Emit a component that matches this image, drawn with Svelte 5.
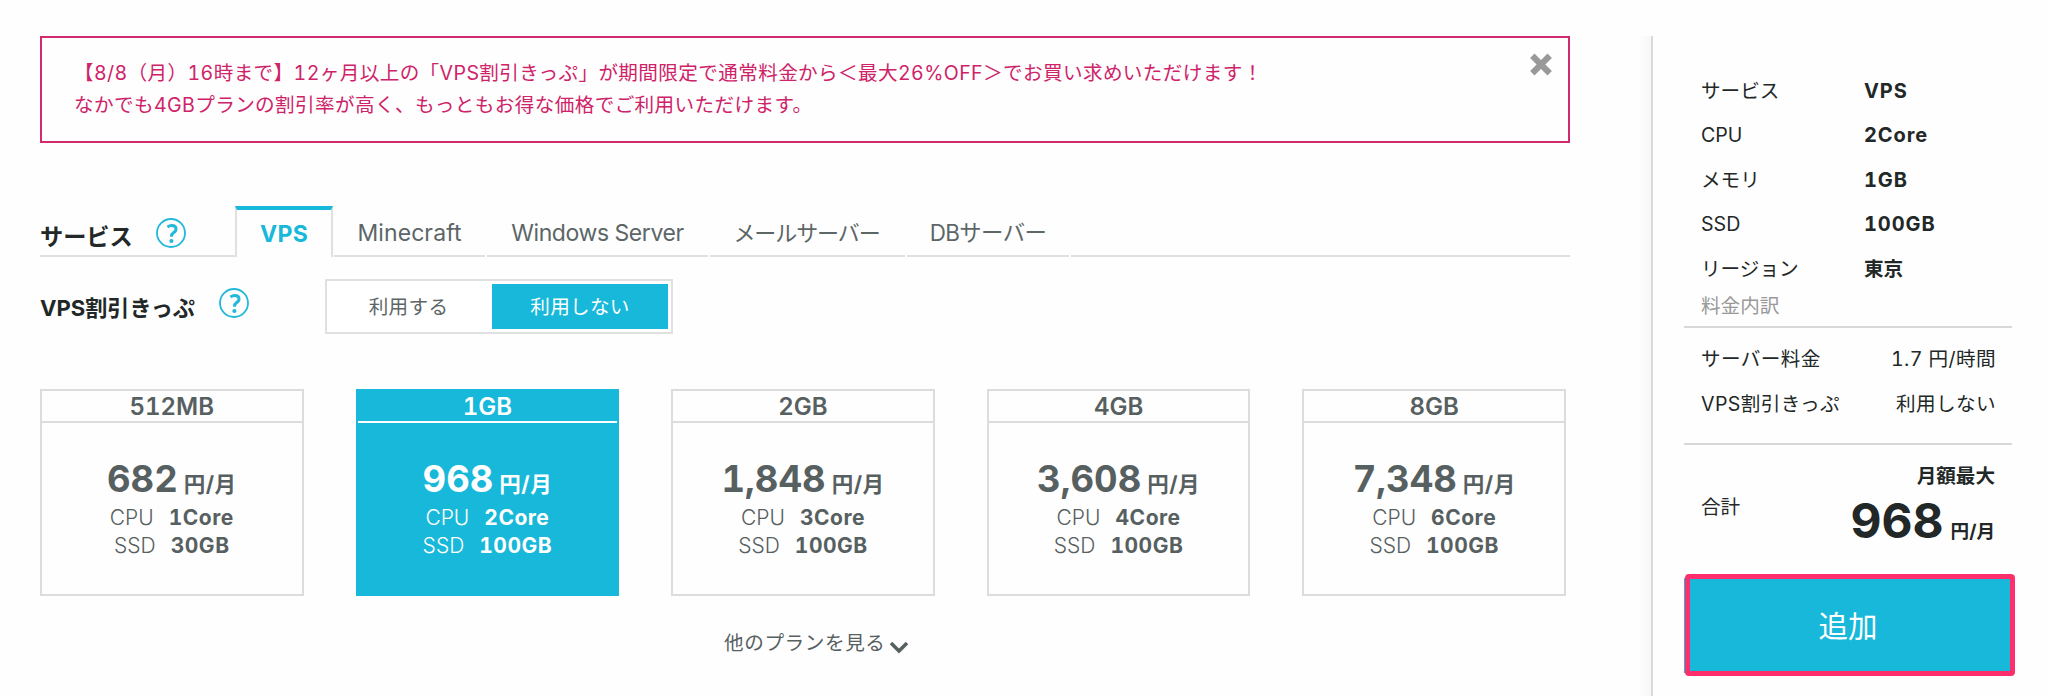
<script lang="ts">
  type Plan = { name: string; price: string; cpu: string; ssd: string };

  const services = ['VPS', 'Minecraft', 'Windows Server', 'メールサーバー', 'DBサーバー'];
  const ticketOptions = ['利用する', '利用しない'];

  const plans: Plan[] = [
    { name: '512MB', price: '682', cpu: '1Core', ssd: '30GB' },
    { name: '1GB', price: '968', cpu: '2Core', ssd: '100GB' },
    { name: '2GB', price: '1,848', cpu: '3Core', ssd: '100GB' },
    { name: '4GB', price: '3,608', cpu: '4Core', ssd: '100GB' },
    { name: '8GB', price: '7,348', cpu: '6Core', ssd: '100GB' },
  ];

  let service = $state('VPS');
  let ticket = $state('利用しない');
  let selected = $state(1);
  let noticeOpen = $state(true);

  let plan = $derived(plans[selected]);
  let summary = $derived([
    ['サービス', service],
    ['CPU', plan.cpu],
    ['メモリ', plan.name],
    ['SSD', plan.ssd],
    ['リージョン', '東京'],
  ]);
</script>

{#snippet help()}
  <button type="button" class="help" aria-label="ヘルプ">
    <svg viewBox="0 0 30 30" width="30" height="30">
      <circle cx="15" cy="15" r="14" fill="none" stroke="currentColor" stroke-width="1.8" />
      <path d="M11.4 8.9 Q13.4 7.6 15.8 7.6 Q20 7.6 20 11 Q20 13.2 17.6 14.6 Q15.5 16 15.5 18.8" fill="none" stroke="currentColor" stroke-width="3" />
      <circle cx="15.4" cy="23" r="2.1" fill="currentColor" />
    </svg>
  </button>
{/snippet}

<div class="page">
  <main>
    {#if noticeOpen}
      <div class="notice">
        <p>【8/8（月）16時まで】12ヶ月以上の「VPS割引きっぷ」が期間限定で通常料金から＜最大26%OFF＞でお買い求めいただけます！</p>
        <p>なかでも4GBプランの割引率が高く、もっともお得な価格でご利用いただけます。</p>
        <button type="button" class="close" aria-label="閉じる" onclick={() => (noticeOpen = false)}>
          <svg viewBox="0 0 24 24" width="24" height="24">
            <path d="M3.3 2.8 L20.7 20.2 M20.7 2.8 L3.3 20.2" stroke="currentColor" stroke-width="6.2" />
          </svg>
        </button>
      </div>
    {/if}

    <div class="services">
      <div class="heading">
        <h2>サービス</h2>
        {@render help()}
      </div>
      {#each services as name, i}
        <button type="button" class="tab tab-{i}" class:active={service === name} onclick={() => (service = name)}>
          {name}
        </button>
      {/each}
      <div class="rest"></div>
    </div>

    <div class="ticket">
      <h2>VPS割引きっぷ</h2>
      {@render help()}
      <div class="switch">
        {#each ticketOptions as option}
          <button type="button" class:on={ticket === option} onclick={() => (ticket = option)}>{option}</button>
        {/each}
      </div>
    </div>

    <div class="plans">
      {#each plans as p, i}
        <button type="button" class="plan" class:selected={selected === i} onclick={() => (selected = i)}>
          <span class="name">{p.name}</span>
          <span class="price"><b>{p.price}</b><small>円/月</small></span>
          <span class="spec"><span>CPU</span><b>{p.cpu}</b></span>
          <span class="spec"><span>SSD</span><b>{p.ssd}</b></span>
        </button>
      {/each}
    </div>

    <button type="button" class="more">
      <span>他のプランを見る</span>
      <svg viewBox="0 0 20 16" width="20" height="16">
        <path d="M2 4 L10 12 L18 4" fill="none" stroke="currentColor" stroke-width="3.6" />
      </svg>
    </button>
  </main>

  <aside>
    <dl>
      {#each summary as [label, value]}
        <div class="row">
          <dt>{label}</dt>
          <dd>{value}</dd>
        </div>
      {/each}
    </dl>
    <p class="caption">料金内訳</p>
    <div class="charges">
      <div class="charge"><span>サーバー料金</span><span>1.7 円/時間</span></div>
      <div class="charge"><span>VPS割引きっぷ</span><span>{ticket}</span></div>
    </div>
    <div class="total">
      <span class="label">合計</span>
      <div class="amount">
        <span class="max">月額最大</span>
        <span class="sum"><b>{plan.price}</b><small>円/月</small></span>
      </div>
    </div>
    <div class="submit">
      <button type="button">追加</button>
    </div>
  </aside>
</div>

<style>
  :global(body) {
    background: #fefefe;
  }

  .page {
    display: flex;
    box-sizing: border-box;
    width: 2048px;
    height: 696px;
    padding-top: 36px;
    overflow: hidden;
    font-family: Inter, 'Noto Sans CJK JP', sans-serif;
    font-size: 19.6px;
    font-variant-numeric: tabular-nums;
    color: #222827;
  }

  button {
    padding: 0;
    border: none;
    background: none;
    font: inherit;
    font-variant-numeric: tabular-nums;
    letter-spacing: inherit;
    color: inherit;
    cursor: pointer;
  }

  svg {
    display: block;
  }

  h2,
  p,
  dl,
  dd {
    margin: 0;
  }

  main {
    box-sizing: border-box;
    width: 1651px;
    padding-left: 40px;
    background: linear-gradient(to right, transparent 1638px, #f7f7f7);
  }

  .notice {
    position: relative;
    box-sizing: border-box;
    width: 1530px;
    height: 107px;
    padding: 20px 32px;
    border: 2px solid #d12a6f;
    color: #cf2369;
    line-height: 31.5px;
    letter-spacing: 0.38px;
    white-space: nowrap;
  }

  .close {
    position: absolute;
    top: 15px;
    right: 15px;
    color: #999;
  }

  .services {
    display: flex;
    width: 1530px;
    height: 51px;
    margin-top: 63px;
  }

  .heading {
    display: flex;
    align-items: center;
    gap: 23px;
    box-sizing: border-box;
    width: 195px;
    padding-top: 4px;
    border-bottom: 2px solid #e0e0e0;
  }

  h2 {
    font-size: 23.2px;
    line-height: 34px;
    font-weight: 700;
    white-space: nowrap;
  }

  .heading h2 {
    padding-top: 8px;
  }

  .help {
    color: #22b9da;
  }

  .tab {
    box-sizing: border-box;
    margin-right: 2px;
    padding-top: 4px;
    border-bottom: 2px solid #e0e0e0;
    color: #5c6667;
    font-size: 23px;
    line-height: 34px;
    white-space: nowrap;
  }

  .tab.active {
    margin-right: 1px;
    padding-top: 0;
    border: 2px solid #e0e0e0;
    border-top: 4px solid #17b8d9;
    border-bottom: none;
    color: #17b8d9;
    font-weight: 700;
  }

  .tab-0 { width: 98px; letter-spacing: 0.3px; }
  .tab-1 { width: 151px; letter-spacing: 0.1px; }
  .tab-2 { width: 221px; letter-spacing: -0.4px; }
  .tab-3 { width: 195px; padding-right: 2px; font-size: 22px; letter-spacing: -1.1px; }
  .tab-4 { width: 162px; font-size: 22.4px; letter-spacing: -0.6px; }

  .rest {
    flex: 1;
    box-sizing: border-box;
    border-bottom: 2px solid #e0e0e0;
  }

  .ticket {
    display: flex;
    align-items: center;
    height: 54px;
    margin-top: 22px;
  }

  .ticket h2 {
    width: 179px;
    padding-top: 4px;
    font-size: 22.1px;
  }

  .ticket .help {
    margin-bottom: 6px;
  }

  .switch {
    display: flex;
    box-sizing: border-box;
    width: 348px;
    height: 55px;
    margin-left: 76px;
    padding: 3px;
    border: 2px solid #e0e0e0;
    background: #fff;
    color: #5c6667;
    letter-spacing: 0.3px;
  }

  .switch button {
    width: 162px;
    padding: 0 5px 2px 0;
  }

  .switch button.on {
    width: 176px;
    padding-right: 0;
    background: #17b8d9;
    color: #fff;
  }

  .plans {
    display: flex;
    gap: 52px;
    margin-top: 56px;
  }

  .plan {
    display: flex;
    flex-direction: column;
    align-items: center;
    box-sizing: border-box;
    width: 263.6px;
    height: 207px;
    border: 2px solid #dcdcdc;
    color: #576061;
    white-space: nowrap;
  }

  .plan b {
    font-weight: 700;
  }

  .name {
    box-sizing: border-box;
    align-self: stretch;
    height: 32px;
    padding-top: 1px;
    border-bottom: 2px solid #dcdcdc;
    font-size: 24px;
    font-weight: 600;
    line-height: 30px;
  }

  .price {
    display: flex;
    align-items: baseline;
    gap: 6px;
    margin-top: 32px;
    line-height: 48px;
  }

  .price b {
    font-size: 36.5px;
  }

  .price small {
    font-size: 21.5px;
    font-weight: 700;
    letter-spacing: 0.5px;
  }

  .spec {
    display: flex;
    gap: 15px;
    margin-top: -4px;
    font-size: 21px;
    line-height: 28px;
  }

  .spec + .spec {
    margin-top: 0;
  }

  .spec span {
    font-weight: 300;
  }

  .spec b {
    letter-spacing: 0.5px;
  }

  .plan.selected {
    border-color: #17b8d9;
    background: #17b8d9;
    color: #fff;
  }

  .plan.selected .name {
    border-color: #fff;
  }

  .more {
    display: flex;
    align-items: center;
    gap: 3px;
    margin: 32px 0 0 684px;
    color: #576061;
    line-height: 30px;
    letter-spacing: 0.6px;
  }

  .more svg {
    margin-top: 8px;
  }

  aside {
    box-sizing: border-box;
    width: 397px;
    padding: 33px 36px 0 31px;
    border-left: 2px solid #dadada;
  }

  .row {
    display: flex;
    height: 44.4px;
    padding-left: 17px;
    line-height: 44px;
  }

  dt {
    width: 163px;
  }

  dd {
    font-size: 20px;
    font-weight: 700;
    letter-spacing: 0.9px;
  }

  .row:last-child dd {
    font-size: 19.6px;
    letter-spacing: 0;
  }

  .caption {
    height: 35px;
    padding-left: 17px;
    color: #999;
    line-height: 31px;
  }

  .charges {
    box-sizing: border-box;
    height: 119px;
    padding: 9px 16px 0 17px;
    border-top: 2px solid #d8d8d8;
    border-bottom: 2px solid #d8d8d8;
    letter-spacing: 0.4px;
  }

  .charge {
    display: flex;
    justify-content: space-between;
    line-height: 45px;
  }

  .total {
    display: flex;
    justify-content: space-between;
    align-items: center;
    box-sizing: border-box;
    height: 133px;
    padding: 0 17px 1px;
  }

  .label {
    padding-bottom: 10px;
  }

  .amount {
    display: flex;
    flex-direction: column;
    align-items: flex-end;
  }

  .max {
    font-weight: 700;
    line-height: 30px;
  }

  .sum {
    display: flex;
    align-items: baseline;
    gap: 7px;
    line-height: 60px;
  }

  .sum b {
    font-size: 48px;
    font-weight: 700;
  }

  .sum small {
    font-size: 18.6px;
    font-weight: 700;
  }

  .submit {
    position: relative;
    height: 95px;
    background: #17b8d9;
  }

  .submit button {
    width: 100%;
    height: 100%;
    padding-bottom: 2px;
    color: #fff;
    font-size: 29.5px;
  }

  /* highlight frame, shifted slightly off the button */
  .submit::after {
    content: '';
    position: absolute;
    inset: -4px -3px -3px 1px;
    border: 5px solid #ff2f6d;
    border-radius: 4px;
    pointer-events: none;
  }
</style>
